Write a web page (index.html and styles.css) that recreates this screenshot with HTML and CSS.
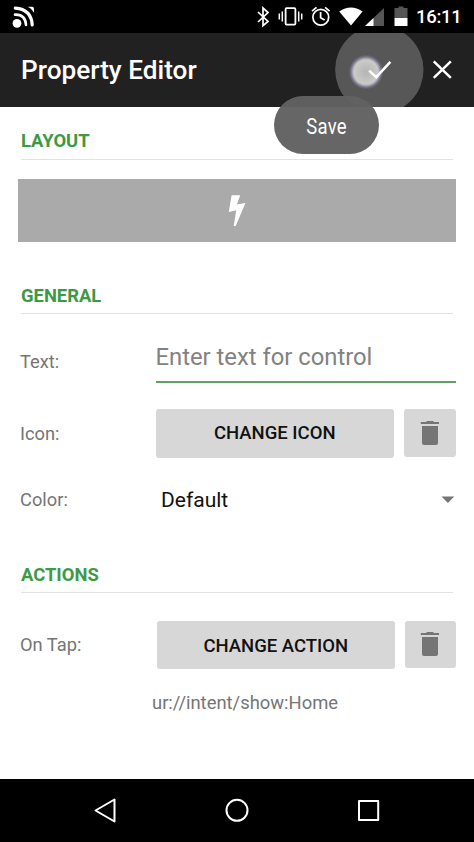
FILE: index.html
```html
<!DOCTYPE html>
<html lang="en">
<head>
<meta charset="utf-8">
<title>Property Editor</title>
<link rel="stylesheet" href="styles.css">
</head>
<body>
<div class="screen">
  <header class="status">
    <svg class="cast" viewBox="12 5 24 24" width="24" height="24"><circle cx="17" cy="23.3" r="4.4" fill="#fff"/><g fill="none" stroke="#fff" stroke-linecap="round"><path d="M15 14.6Q25.4 14.2 26 25" stroke-width="2.6"/><path d="M15.3 8.2Q31.2 9.4 32.2 24.8" stroke-width="3.2"/></g><path d="M28 6.8h4q2 0 2 2v4q-2-4-6-6z" fill="#fff"/></svg>
    <div class="status-icons">
      <svg viewBox="256 5 206 23" width="206" height="23">
        <path d="M258 12l10 9.5-5 4.2V8l5 4.5-10 9.5" fill="none" stroke="#fff" stroke-width="1.7"/>
        <rect x="285.6" y="8.2" width="9.8" height="16.4" rx="1" fill="none" stroke="#fff" stroke-width="1.8"/>
        <path d="M282.3 11.5v10M279.3 13.5v6M298.7 11.5v10M301.7 13.5v6" stroke="#fff" stroke-width="1.5"/>
        <g fill="none" stroke="#fff" stroke-width="1.7"><circle cx="320.8" cy="17.2" r="7.9"/><path d="M320.6 12v5.7l4 2.4M312 11.2l4.5-3.8M329.6 11.2l-4.5-3.8"/></g>
        <path d="M339.2 11.5q11.8-8.2 23.4 0L351 25.6z" fill="#fff"/>
        <path d="M384 8v18h-19z" fill="#555"/><path d="M373.5 18v8H365z" fill="#fff"/>
        <path d="M394.5 8h4V6.5h5V8h4v10h-13z" fill="#555"/><path d="M394.5 18h13v8h-13z" fill="#fff"/>
      </svg>
    </div>
    <span class="time">16:11</span>
  </header>
  <div class="toolbar">
    <h1 class="title">Property Editor</h1>
    <svg class="tools" viewBox="334 33 128 74" width="128" height="74">
      <defs><radialGradient id="halo"><stop offset="0" stop-color="#b4b4b0"/><stop offset=".7" stop-color="#cacac7"/><stop offset=".77" stop-color="#aaaabd"/><stop offset="1" stop-color="#77779b" stop-opacity="0"/></radialGradient></defs>
      <circle cx="379.2" cy="70" r="44.5" fill="#575757"/>
      <circle cx="365.8" cy="72.3" r="17.5" fill="url(#halo)"/>
      <path d="M369 70.8l7.1 6.7L390.3 62M434 61.5l17.2 16.7M451.2 61.5L434 78.2" fill="none" stroke="#fff" stroke-width="2.5"/>
    </svg>
    <div class="tooltip"><span>Save</span></div>
  </div>
  <main class="content">
    <h2 class="heading first">LAYOUT</h2>
    <div class="preview"><svg viewBox="228 195 18 33" width="18" height="33"><path d="M231.6 196.2h8.6l-3.3 9.2 8.5-1.4-9.7 23h-2l2.6-15.8-7.5 1.7z" fill="#fff"/></svg></div>
    <h2 class="heading general">GENERAL</h2>
    <div class="row text-row"><span class="label">Text:</span><div class="input"><span>Enter text for control</span></div></div>
    <div class="row icon-row"><span class="label">Icon:</span><button class="button"><span>CHANGE ICON</span></button><button class="delete" aria-label="Delete"><svg viewBox="0 0 20 26" width="20" height="26"><path d="M6 2l1-1h6l1 1h5v2H.8V2zM2 6h16v17q0 2-2 2H4q-2 0-2-2z"/></svg></button></div>
    <div class="row color-row"><span class="label">Color:</span><div class="select"><span>Default</span><svg viewBox="0 0 14 8" width="14" height="8"><path d="M.5.5h12.8L6.9 7z"/></svg></div></div>
    <h2 class="heading actions">ACTIONS</h2>
    <div class="row action-row"><span class="label">On Tap:</span><button class="button"><span>CHANGE ACTION</span></button><button class="delete" aria-label="Delete"><svg viewBox="0 0 20 26" width="20" height="26"><path d="M6 2l1-1h6l1 1h5v2H.8V2zM2 6h16v17q0 2-2 2H4q-2 0-2-2z"/></svg></button></div>
    <div class="url"><span>ur://intent/show:Home</span></div>
  </main>
  <nav class="nav">
    <svg viewBox="92 796 26 28" width="26" height="28"><path d="M114.5 799.5v22L95.5 810.5z"/></svg>
    <svg viewBox="224 797 26 26" width="26" height="26"><circle cx="237" cy="810.3" r="10.5"/></svg>
    <svg viewBox="356 797 26 26" width="26" height="26"><rect x="359" y="801" width="19.2" height="19"/></svg>
  </nav>
</div>
</body>
</html>
```
FILE: styles.css
```css
* { box-sizing: border-box; margin: 0; padding: 0; }
body { background: #fff; font-family: Roboto, sans-serif; overflow: hidden; }
svg { display: block; flex: none; }
span { white-space: nowrap; }
.screen { width: 474px; height: 842px; display: flex; flex-direction: column; }
.status { height: 33px; flex: none; background: #000; display: flex; padding: 5px 0 0 12px; color: #fff; }
.status-icons { margin-left: 220px; width: 160px; overflow: hidden; }
.time { font-size: 18.5px; font-weight: 500; line-height: 25px; letter-spacing: -.3px; }
.toolbar { height: 73.5px; flex: none; background: #212121; display: flex; justify-content: space-between; padding: 0 12px 0 21px; position: relative; }
.title { color: #fff; font-size: 26.2px; font-weight: 500; line-height: 75px; white-space: nowrap; }
.tools { height: 73.5px; }
.tooltip { position: absolute; left: 273.5px; top: 63px; width: 105.5px; height: 58px; border-radius: 29px; background: rgba(97, 97, 97, .97); color: #fff; display: flex; align-items: center; justify-content: center; font-size: 21.5px; padding-top: 2px; }
.tooltip span { transform: scaleX(.86); letter-spacing: .3px; }
.content { flex: 1; display: flex; flex-direction: column; padding-left: 18px; padding-right: 18.5px; }
.heading { flex: none; margin: 0 3px; height: 30px; line-height: 23px; border-bottom: 1.5px solid #e2e2e2; color: #3e9943; font-size: 18.4px; font-weight: 700; }
.first { margin-top: 22px; height: 31px; line-height: 24px; }
.preview { margin-top: 19.5px; height: 63px; flex: none; background: #aaa; display: flex; align-items: center; justify-content: center; }
.general { margin-top: 42px; }
.row { display: flex; flex: none; align-items: center; padding-left: 2px; }
.label { width: 135.5px; flex: none; font-size: 18.3px; color: #757575; }
.text-row { margin-top: 25px; height: 45px; }
.input { flex: 1; height: 44px; margin-top: -2px; border-bottom: 2px solid #5fa163; color: #828282; font-size: 23.8px; line-height: 37px; }
.icon-row { margin-top: 25px; height: 48.5px; }
.button { border: 0; width: 238.5px; height: 48.5px; border-radius: 3px; background: #d7d7d7; color: #111; font: 500 18.5px/48px Roboto, sans-serif; }
.delete { border: 0; margin-left: auto; width: 51.5px; height: 47.5px; border-radius: 3px; background: #d7d7d7; display: flex; align-items: center; justify-content: center; align-self: flex-start; }
.delete path, .select path { fill: #757575; }
.color-row { margin-top: 27px; height: 30px; }
.color-row .label { margin-top: -1px; }
.select { flex: 1; display: flex; align-items: center; justify-content: space-between; padding: 0 1px 0 5.5px; font-size: 21px; color: #111; }
.actions { margin-top: 48px; }
.action-row { margin-top: 28px; height: 48.5px; }
.action-row .label { width: 137px; line-height: 24px; padding-top: 1px; }
.action-row .button { width: 237.5px; line-height: 49px; padding-top: 1px; }
.action-row .delete { width: 50.5px; }
.url { margin: 20px 0 0 134px; font-size: 18.4px; line-height: 28px; color: #757575; }
.nav { height: 63px; flex: none; background: #000; display: flex; align-items: center; justify-content: space-between; padding: 0 92px; }
.nav svg { fill: none; stroke: #fff; stroke-width: 2; stroke-linejoin: round; position: relative; top: -.5px; }
```
